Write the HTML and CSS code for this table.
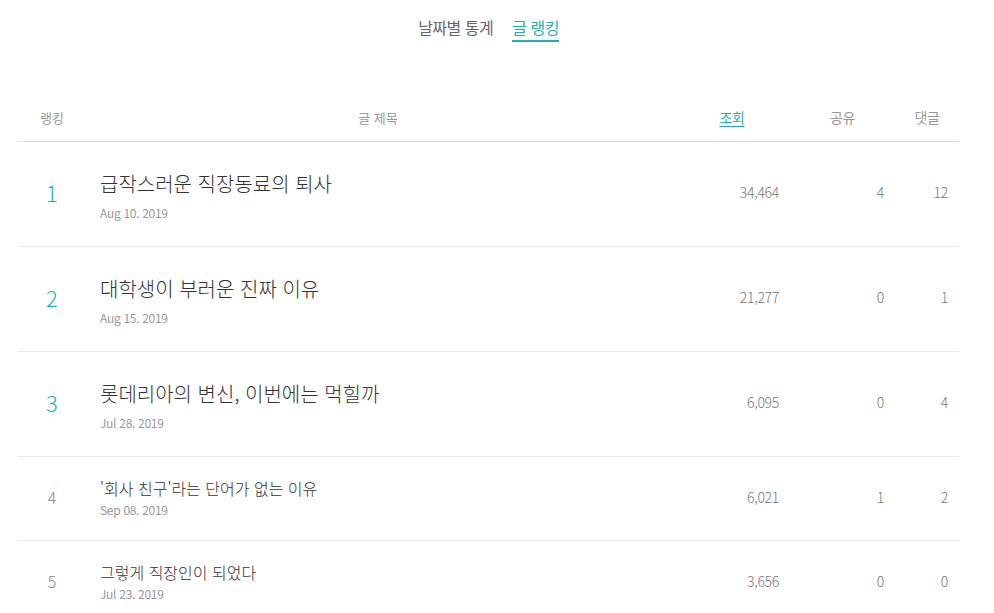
FILE: index.html
```html
<!DOCTYPE html>
<html lang="ko">
<head>
<meta charset="utf-8">
<link rel="stylesheet" href="styles.css">
</head>
<body>
<div class="page">
  <nav class="tabs">
    <a class="tab">날짜별 통계</a>
    <a class="tab active">글 랭킹</a>
  </nav>
  <div class="table">
    <div class="row head">
      <div class="c-rank">랭킹</div>
      <div class="c-title">글 제목</div>
      <div class="c-num views"><span class="sorted">조회</span></div>
      <div class="c-num">공유</div>
      <div class="c-num">댓글</div>
    </div>
    <div class="row top">
      <div class="c-rank">1</div>
      <div class="c-title"><div class="t">급작스러운 직장동료의 퇴사</div><div class="d">Aug 10. 2019</div></div>
      <div class="c-num">34,464</div>
      <div class="c-num">4</div>
      <div class="c-num">12</div>
    </div>
    <div class="row top">
      <div class="c-rank">2</div>
      <div class="c-title"><div class="t">대학생이 부러운 진짜 이유</div><div class="d">Aug 15. 2019</div></div>
      <div class="c-num">21,277</div>
      <div class="c-num">0</div>
      <div class="c-num">1</div>
    </div>
    <div class="row top">
      <div class="c-rank">3</div>
      <div class="c-title"><div class="t">롯데리아의 변신, 이번에는 먹힐까</div><div class="d">Jul 28. 2019</div></div>
      <div class="c-num">6,095</div>
      <div class="c-num">0</div>
      <div class="c-num">4</div>
    </div>
    <div class="row">
      <div class="c-rank">4</div>
      <div class="c-title"><div class="t">'회사 친구'라는 단어가 없는 이유</div><div class="d">Sep 08. 2019</div></div>
      <div class="c-num">6,021</div>
      <div class="c-num">1</div>
      <div class="c-num">2</div>
    </div>
    <div class="row">
      <div class="c-rank">5</div>
      <div class="c-title"><div class="t">그렇게 직장인이 되었다</div><div class="d">Jul 23. 2019</div></div>
      <div class="c-num">3,656</div>
      <div class="c-num">0</div>
      <div class="c-num">0</div>
    </div>
  </div>
</div>
</body>
</html>
```

FILE: styles.css
```css
html, body {
  margin: 0;
  padding: 0;
  background: #fff;
}
body {
  font-family: "Noto Sans CJK KR", "Noto Sans", sans-serif;
  color: #333;
  overflow: hidden;
}
.page {
  width: 941px;
  margin-left: 18px;
}
.tabs {
  display: flex;
  justify-content: center;
  gap: 19px;
  padding-top: 14px;
  height: 95px;
  box-sizing: border-box;
}
.tab {
  font-size: 16px;
  line-height: 26px;
  height: 28px;
  color: #666;
  letter-spacing: -0.5px;
  box-sizing: border-box;
}
.tab.active {
  color: #1ab3ad;
  border-bottom: 2px solid #1ab3ad;
}
.row {
  display: grid;
  grid-template-columns: 68px 1fr 120px 105px 64px;
  align-items: center;
  height: 83px;
  border-bottom: 1px solid #eaeaea;
}
.row.top {
  height: 104px;
}
.row.head {
  height: 44px;
  border-bottom: 1px solid #dedede;
  font-size: 13px;
  color: #999;
  padding-bottom: 2px;
}
.row.head .c-title { text-align: center; padding: 0; }
.row.head .c-num { text-align: center; padding: 0; color: #999; font-weight: 400; }
.row.head .c-num.views { padding-left: 4px; }
.row.head .c-rank { font-size: 13px; color: #999; padding: 0; font-weight: 400; }
.sorted {
  color: #1ab3ad;
  text-decoration: underline;
  text-underline-offset: 3px;
}
.c-rank {
  text-align: center;
  font-size: 16px;
  color: #888;
  font-weight: 300;
  padding-bottom: 3px;
}
.row.top .c-rank {
  font-size: 22px;
  color: #1ab3ad;
  padding-bottom: 5px;
}
.c-title {
  padding-left: 14px;
  padding-bottom: 3px;
}
.row.top .c-title {
  padding-top: 3px;
  padding-bottom: 0;
}
.t {
  font-size: 16px;
  color: #333;
  font-weight: 300;
  line-height: 22px;
}
.row.top .t {
  font-size: 20px;
  line-height: 26px;
  letter-spacing: 0;
}
.d {
  font-size: 12px;
  color: #999;
  margin-top: 2px;
  letter-spacing: -0.3px;
}
.row.top .d { margin-top: 7px; }
.c-num {
  text-align: right;
  padding-right: 11px;
  padding-bottom: 3px;
  font-size: 14px;
  color: #777;
  font-weight: 300;
  letter-spacing: -0.3px;
}
.row.top .c-num { padding-bottom: 4px; }
```
